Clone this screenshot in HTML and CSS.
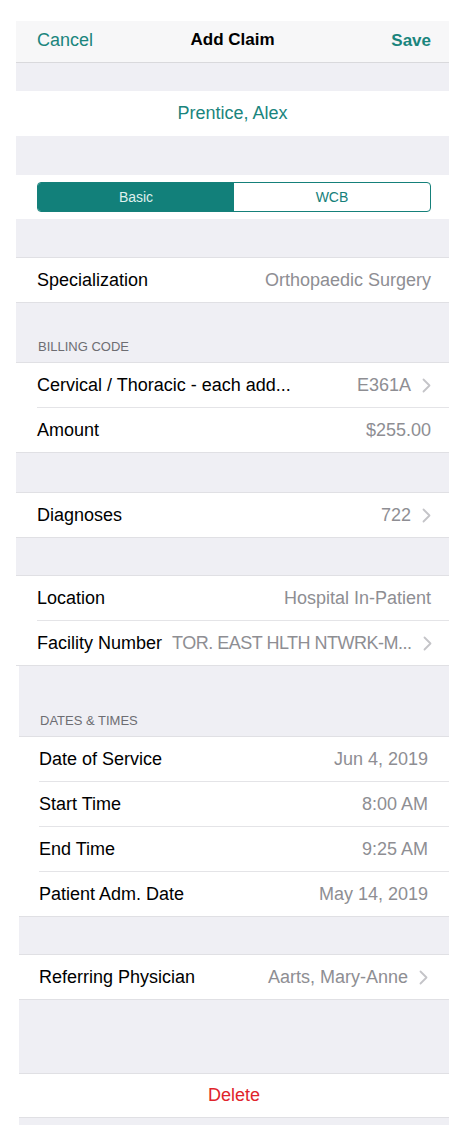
FILE: index.html
```html
<!DOCTYPE html>
<html lang="en">
<head>
    <meta charset="UTF-8">
    <meta name="viewport" content="width=device-width, initial-scale=1.0">
    <title>Add Claim</title>
    <link rel="stylesheet" href="styles.css">
</head>
<body>
    <div class="screen screen-top">
        <div class="nav">
            <span class="nav-btn">Cancel</span>
            <span class="nav-title">Add Claim</span>
            <span class="nav-btn nav-save">Save</span>
        </div>

        <div class="spacer" style="height: 28px"></div>
        <div class="patient">Prentice, Alex</div>
        <div class="spacer" style="height: 39px"></div>

        <div class="segment-wrap">
            <div class="segment">
                <div class="segment-item active">Basic</div>
                <div class="segment-item">WCB</div>
            </div>
        </div>

        <div class="spacer" style="height: 38px"></div>
        <div class="group">
            <div class="row">
                <div class="row-inner">
                    <span class="label">Specialization</span>
                    <span class="value">Orthopaedic Surgery</span>
                </div>
            </div>
        </div>

        <div class="section-header" style="height: 59px">BILLING CODE</div>
        <div class="group">
            <div class="row">
                <div class="row-inner">
                    <span class="label">Cervical / Thoracic - each add...</span>
                    <span class="value">E361A<svg class="chevron" viewBox="0 0 9 15"><path d="M1.5 1.5 L7.5 7.5 L1.5 13.5"/></svg></span>
                </div>
            </div>
            <div class="row">
                <div class="row-inner">
                    <span class="label">Amount</span>
                    <span class="value">$255.00</span>
                </div>
            </div>
        </div>

        <div class="spacer" style="height: 39px"></div>
        <div class="group">
            <div class="row">
                <div class="row-inner">
                    <span class="label">Diagnoses</span>
                    <span class="value">722<svg class="chevron" viewBox="0 0 9 15"><path d="M1.5 1.5 L7.5 7.5 L1.5 13.5"/></svg></span>
                </div>
            </div>
        </div>

        <div class="spacer" style="height: 37px"></div>
        <div class="group">
            <div class="row">
                <div class="row-inner">
                    <span class="label">Location</span>
                    <span class="value">Hospital In-Patient</span>
                </div>
            </div>
            <div class="row">
                <div class="row-inner">
                    <span class="label">Facility Number</span>
                    <span class="value value-tight">TOR. EAST HLTH NTWRK-M...<svg class="chevron" viewBox="0 0 9 15"><path d="M1.5 1.5 L7.5 7.5 L1.5 13.5"/></svg></span>
                </div>
            </div>
        </div>
    </div>

    <div class="screen screen-bottom">
        <div class="section-header" style="height: 70px">DATES &amp; TIMES</div>
        <div class="group">
            <div class="row">
                <div class="row-inner">
                    <span class="label">Date of Service</span>
                    <span class="value">Jun 4, 2019</span>
                </div>
            </div>
            <div class="row">
                <div class="row-inner">
                    <span class="label">Start Time</span>
                    <span class="value">8:00 AM</span>
                </div>
            </div>
            <div class="row">
                <div class="row-inner">
                    <span class="label">End Time</span>
                    <span class="value">9:25 AM</span>
                </div>
            </div>
            <div class="row">
                <div class="row-inner">
                    <span class="label">Patient Adm. Date</span>
                    <span class="value">May 14, 2019</span>
                </div>
            </div>
        </div>

        <div class="spacer" style="height: 37px"></div>
        <div class="group">
            <div class="row">
                <div class="row-inner">
                    <span class="label">Referring Physician</span>
                    <span class="value">Aarts, Mary-Anne<svg class="chevron" viewBox="0 0 9 15"><path d="M1.5 1.5 L7.5 7.5 L1.5 13.5"/></svg></span>
                </div>
            </div>
        </div>

        <div class="spacer" style="height: 73px"></div>
        <div class="group">
            <div class="delete">Delete</div>
        </div>
        <div class="spacer" style="height: 7px"></div>
    </div>
</body>
</html>
```

FILE: styles.css
```css
* {
    box-sizing: border-box;
    margin: 0;
    padding: 0;
}

body {
    font-family: "Liberation Sans", Arial, sans-serif;
    background-color: #fff;
    color: #000;
    font-size: 18px;
}

.screen {
    background-color: #efeff4;
    --pad-left: 21px;
    --pad-right: 18px;
}

.screen-top {
    margin: 21px 0 0 16px;
    width: 433px;
}

.screen-bottom {
    margin-left: 19px;
    width: 430px;
    --pad-left: 20px;
    --pad-right: 21px;
}

.nav {
    display: flex;
    align-items: center;
    justify-content: space-between;
    height: 42px;
    padding: 0 var(--pad-right) 2px var(--pad-left);
    background-color: #f7f7f8;
    border-bottom: 1px solid #d9d9dc;
    position: relative;
}

.nav-btn {
    color: #1a857d;
    font-size: 18px;
}

.nav-save {
    font-weight: bold;
    font-size: 17px;
}

.nav-title {
    font-weight: bold;
    font-size: 17px;
    position: absolute;
    left: 50%;
    transform: translateX(-50%);
    top: 9px;
}

.patient {
    height: 45px;
    display: flex;
    align-items: center;
    justify-content: center;
    background-color: #fff;
    color: #1a857d;
}

.segment-wrap {
    height: 44px;
    background-color: #fff;
    padding: 7px var(--pad-right) 0 var(--pad-left);
}

.segment {
    display: flex;
    height: 30px;
    border: 1px solid #15807a;
    border-radius: 4px;
    overflow: hidden;
}

.segment-item {
    flex: 1;
    display: flex;
    align-items: center;
    justify-content: center;
    font-size: 14px;
    color: #15807a;
}

.segment-item.active {
    background-color: #12807a;
    color: #dff0ee;
}

.section-header {
    display: flex;
    align-items: flex-end;
    padding: 0 var(--pad-right) 8px calc(var(--pad-left) + 1px);
    font-size: 13px;
    color: #6d6d72;
}

.group {
    background-color: #fff;
    border-top: 1px solid #e0e0e4;
    border-bottom: 1px solid #e0e0e4;
}

.row {
    padding-left: var(--pad-left);
}

.row-inner {
    display: flex;
    align-items: center;
    justify-content: space-between;
    gap: 10px;
    height: 43px;
    box-sizing: content-box;
    padding: 1px var(--pad-right) 0 0;
    white-space: nowrap;
}

.row + .row .row-inner {
    border-top: 1px solid #e4e4e7;
}

.value {
    display: flex;
    align-items: center;
    color: #8e8e93;
}

.value-tight {
    letter-spacing: -0.5px;
}

.chevron {
    width: 9px;
    height: 15px;
    margin-left: 11px;
    fill: none;
    stroke: #c4c4c8;
    stroke-width: 1.8;
    stroke-linecap: round;
    stroke-linejoin: round;
}

.delete {
    height: 43px;
    display: flex;
    align-items: center;
    justify-content: center;
    color: #e0242b;
}
```
